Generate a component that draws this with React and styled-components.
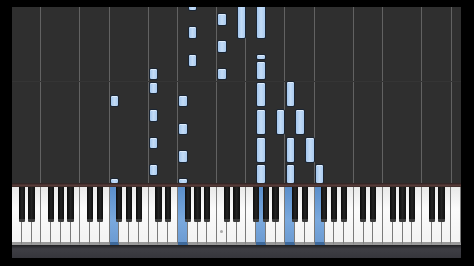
import styled, { createGlobalStyle } from "styled-components";

const GlobalStyle = createGlobalStyle`
  html, body {
    margin: 0;
    padding: 0;
    background: #000;
    font-family: "Liberation Sans", Arial, sans-serif;
  }
`;

const WHITE_KEYS = 46;
const KEY_W = 100 / WHITE_KEYS;

/* octave split lines sit before every C and F */
const segments = [3, 4, 3, 4, 3, 4, 3, 4, 3, 4, 3, 4, 3, 1];

/* [white key index, top, bottom] in page pixels */
const notes = [
  [10, 95, 107], [10, 178, 184],
  [14, 68, 80], [14, 82, 94], [14, 109, 122], [14, 137, 149], [14, 164, 176],
  [17, 95, 107], [17, 123, 135], [17, 150, 163], [17, 178, 184],
  [18, 4, 11], [18, 26, 39], [18, 54, 67],
  [21, 13, 26], [21, 40, 53], [21, 68, 80],
  [23, 4, 39],
  [25, 4, 39], [25, 54, 60], [25, 61, 80], [25, 82, 107], [25, 109, 135],
  [25, 137, 163], [25, 164, 184],
  [27, 109, 135],
  [28, 81, 107], [28, 137, 163], [28, 164, 184],
  [29, 109, 135],
  [30, 137, 163],
  [31, 164, 184],
];

const pressed = [10, 17, 25, 28, 31];
const MIDDLE_C = 21;

const Frame = styled.div`
  width: 474px;
  height: 266px;
  background: #000;
  padding: 7px 13px 8px 12px;
  box-sizing: border-box;
  display: flex;
  flex-direction: column;
`;

const Roll = styled.div`
  position: relative;
  height: 176px;
  display: flex;
  background: #2f2f2f;
  overflow: hidden;
  &::after {
    content: "";
    position: absolute;
    left: 0;
    right: 0;
    top: 74px;
    height: 1px;
    background: #353535;
  }
`;

const Segment = styled.div`
  flex: ${(p) => p.$count} 1 0;
  border-left: ${(p) => (p.$first ? "none" : "1px solid #626262")};
`;

const Note = styled.div`
  position: absolute;
  box-sizing: border-box;
  border: 1px solid #1a2533;
  border-radius: 2px;
  background: linear-gradient(90deg, #a4c6ec 0%, #c2dbf6 50%, #abcbef 100%);
  box-shadow: inset 0 1px 0 #dcebfb;
  z-index: 1;
`;

const Rail = styled.div`
  height: 4px;
  background: linear-gradient(#2a2020, #5a3d3a 60%, #3a2a28);
`;

const Keyboard = styled.div`
  position: relative;
  height: 58px;
  display: flex;
  background: #7d7d7d;
`;

const WhiteKey = styled.div`
  flex: 1 1 0;
  box-sizing: border-box;
  border-right: 1px solid #7a7a7a;
  background: ${(p) =>
    p.$on
      ? "linear-gradient(#5b8fcb, #7aa9de 60%, #6c9bd2)"
      : "linear-gradient(#e9e9e9, #fbfbfb 40%, #f4f4f4 90%)"};
  border-bottom: 3px solid ${(p) => (p.$on ? "#3f6a9c" : "#9a9a9a")};
  display: flex;
  align-items: flex-end;
  justify-content: center;
  padding-bottom: 9px;
  &:last-child {
    border-right: none;
  }
`;

const Dot = styled.span`
  width: 3px;
  height: 3px;
  border-radius: 50%;
  background: #aaa;
`;

const BlackKey = styled.div`
  position: absolute;
  top: 0;
  width: 6.2px;
  height: 35px;
  margin-left: -3.1px;
  border-radius: 0 0 1px 1px;
  background: linear-gradient(90deg, #0c0c0c, #242424 50%, #101010);
  border-bottom: 3px solid #3c3c3c;
  box-sizing: border-box;
  z-index: 2;
`;

const Base = styled.div`
  height: 13px;
  background: linear-gradient(#1f1f22, #3e3e44 30%, #36363c);
`;

const hasSharp = (i) => [0, 1, 3, 4, 5].includes(i % 7) && i < WHITE_KEYS - 1;

export default function App() {
  return (
    <>
      <GlobalStyle />
      <Frame>
        <Roll>
          {segments.map((n, i) => (
            <Segment key={i} $count={n} $first={i === 0} />
          ))}
          {notes.map(([k, t, b], i) => (
            <Note
              key={i}
              style={{
                left: `calc(${k * KEY_W}% + 0.2px)`,
                width: `calc(${KEY_W}% - 0.2px)`,
                top: t - 7,
                height: b - t,
              }}
            />
          ))}
        </Roll>
        <Rail />
        <Keyboard>
          {Array.from({ length: WHITE_KEYS }, (_, i) => (
            <WhiteKey key={i} $on={pressed.includes(i)}>
              {i === MIDDLE_C && <Dot />}
            </WhiteKey>
          ))}
          {Array.from({ length: WHITE_KEYS }, (_, i) =>
            hasSharp(i) ? (
              <BlackKey key={`b${i}`} style={{ left: `${(i + 1) * KEY_W}%` }} />
            ) : null
          )}
        </Keyboard>
        <Base />
      </Frame>
    </>
  );
}
